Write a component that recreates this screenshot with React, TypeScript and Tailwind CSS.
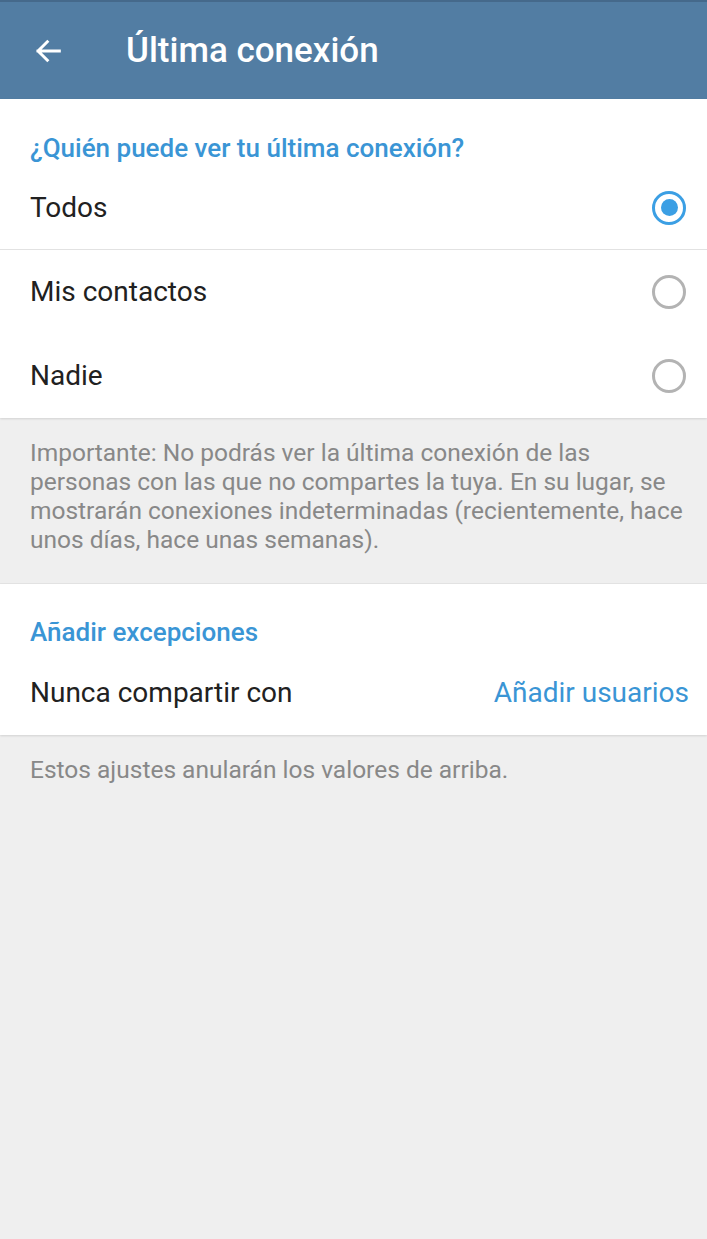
import React from "react";

const options = ["Todos", "Mis contactos", "Nadie"];

function Radio({ checked }: { checked: boolean }) {
  if (checked) {
    return (
      <div className="w-[34px] h-[34px] rounded-full border-[3.5px] border-[#3b9fe4] flex items-center justify-center">
        <div className="w-[17px] h-[17px] rounded-full bg-[#3b9fe4]" />
      </div>
    );
  }
  return <div className="w-[34px] h-[34px] rounded-full border-[3px] border-[#b3b3b3]" />;
}

export default function App() {
  const selected = "Todos";

  return (
    <div
      className="min-h-[1239px] bg-[#efefef]"
      style={{ fontFamily: "Roboto, 'Noto Sans', sans-serif" }}
    >
      {/* Action bar */}
      <header className="h-[99px] bg-[#527da3] border-t-2 border-[#45698b] flex items-center shadow-[0_1px_2px_rgba(0,0,0,0.15)]">
        <div className="w-[126px] pl-[31px] flex items-center">
          <svg width="34" height="34" viewBox="0 0 24 24" fill="none">
            <path
              d="M20 12H5M11.5 5.5L5 12l6.5 6.5"
              stroke="#ffffff"
              strokeWidth="2.1"
              strokeLinecap="square"
            />
          </svg>
        </div>
        <h1 className="text-white text-[35px] font-medium leading-none">Última conexión</h1>
      </header>

      {/* Who can see */}
      <section className="bg-white pt-[31px] shadow-[0_1px_2px_rgba(0,0,0,0.12)]">
        <h2 className="px-[30px] text-[26px] leading-[36px] font-medium text-[#3a95d5]">
          ¿Quién puede ver tu última conexión?
        </h2>
        {options.map((opt, i) => (
          <div
            key={opt}
            className={
              "h-[84px] flex items-center justify-between pl-[30px] pr-[21px] " +
              (i === 0 ? "border-b border-[#e2e2e2]" : "")
            }
          >
            <span className="text-[28px] text-[#212121]">{opt}</span>
            <Radio checked={opt === selected} />
          </div>
        ))}
      </section>

      <p className="pl-[30px] pr-[20px] pt-[20px] pb-[29px] text-[24.5px] leading-[29px] text-[#888888] border-b border-[#e4e4e4]">
        Importante: No podrás ver la última conexión de las personas con las que no compartes la tuya. En su
        lugar, se mostrarán conexiones indeterminadas (recientemente, hace unos días, hace unas semanas).
      </p>

      {/* Exceptions */}
      <section className="bg-white pt-[30px] shadow-[0_1px_2px_rgba(0,0,0,0.12)]">
        <h2 className="px-[30px] text-[26px] leading-[36px] font-medium text-[#3a95d5]">
          Añadir excepciones
        </h2>
        <div className="h-[85px] flex items-center justify-between pl-[30px] pr-[18px]">
          <span className="text-[28px] text-[#212121]">Nunca compartir con</span>
          <span className="text-[28px] text-[#3a95d5]">Añadir usuarios</span>
        </div>
      </section>

      <p className="px-[30px] pt-[20px] text-[24.5px] leading-[29px] text-[#888888]">
        Estos ajustes anularán los valores de arriba.
      </p>
    </div>
  );
}
